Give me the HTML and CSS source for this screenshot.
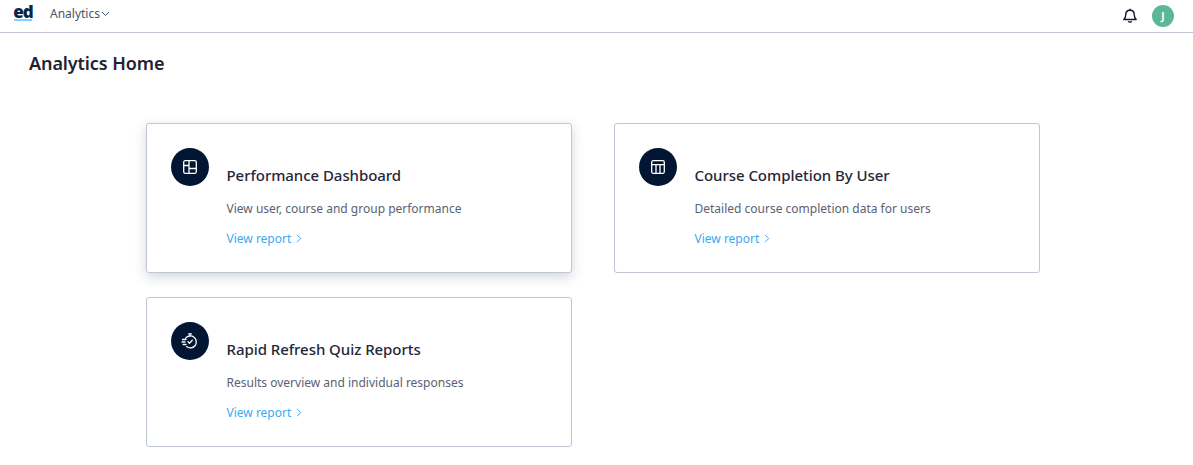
FILE: index.html
```html
<!DOCTYPE html>
<html lang="en">
<head>
<meta charset="utf-8">
<title>Analytics Home</title>
<link rel="stylesheet" href="styles.css">
</head>
<body>
<header class="topbar">
  <div class="topbar-left">
    <div class="logo"><span class="logo-text">ed</span><span class="logo-line"></span></div>
    <nav class="nav-item">Analytics<svg class="chev-down" width="9" height="6" viewBox="0 0 9 6" fill="none"><path d="M1 1l3.500 3.500L8 1" stroke="#4a5568" stroke-width="1"/></svg></nav>
  </div>
  <div class="topbar-right">
    <svg class="bell" width="16" height="16" viewBox="0 0 16 16" fill="none" stroke="#111827" stroke-width="1.400" stroke-linejoin="round"><path d="M8 2.200c-2.700 0-4.200 2-4.200 4.300 0 2.400-.8 3.900-2 5h12.400c-1.200-1.100-2-2.600-2-5 0-2.300-1.500-4.300-4.200-4.300z"/><path d="M6.300 13.300c.5 1.100 2.900 1.100 3.400 0"/><path d="M8 .8v1.400"/></svg>
    <div class="avatar">J</div>
  </div>
</header>
<main class="page">
  <h1 class="page-title">Analytics Home</h1>
  <section class="cards">
    <article class="card card-raised">
      <div class="card-icon"><svg width="16" height="16" viewBox="0 0 16 16" fill="none" stroke="#fff" stroke-width="1.300"><rect x="1.700" y="1.700" width="12.600" height="12.600" rx="1.500"/><path d="M7 1.700v12.600M1.700 6.500H7M7 9.500h7.300"/></svg></div>
      <div class="card-body">
        <h2 class="card-title">Performance Dashboard</h2>
        <p class="card-desc">View user, course and group performance</p>
        <a class="card-link" href="#">View report<svg width="6" height="9" viewBox="0 0 6 9" fill="none"><path d="M1 .8l3.700 3.700L1 8.200" stroke="#3ba9f0" stroke-width="1"/></svg></a>
      </div>
    </article>
    <article class="card">
      <div class="card-icon"><svg width="16" height="16" viewBox="0 0 16 16" fill="none" stroke="#fff" stroke-width="1.300"><rect x="1.700" y="1.700" width="12.600" height="12.600" rx="1.500"/><path d="M1.700 5.700h12.600M6 5.700v8.600M10 5.700v8.600"/></svg></div>
      <div class="card-body">
        <h2 class="card-title">Course Completion By User</h2>
        <p class="card-desc">Detailed course completion data for users</p>
        <a class="card-link" href="#">View report<svg width="6" height="9" viewBox="0 0 6 9" fill="none"><path d="M1 .8l3.700 3.700L1 8.200" stroke="#3ba9f0" stroke-width="1"/></svg></a>
      </div>
    </article>
    <article class="card">
      <div class="card-icon"><svg width="18" height="18" viewBox="0 0 18 18" fill="none" stroke="#fff" stroke-width="1.300" stroke-linecap="round" stroke-linejoin="round"><path d="M7.500 1.800h3M9 1.800v2"/><path d="M4.600 6.200A6 6 0 1 1 5.500 14.600"/><path d="M1.500 7.500h3.500M1 10h3M2.200 12.500h2.800"/><path d="M7 9.800l1.500 1.400 2.800-3"/></svg></div>
      <div class="card-body">
        <h2 class="card-title">Rapid Refresh Quiz Reports</h2>
        <p class="card-desc">Results overview and individual responses</p>
        <a class="card-link" href="#">View report<svg width="6" height="9" viewBox="0 0 6 9" fill="none"><path d="M1 .8l3.700 3.700L1 8.200" stroke="#3ba9f0" stroke-width="1"/></svg></a>
      </div>
    </article>
  </section>
</main>
</body>
</html>
```

FILE: styles.css
```css
* { box-sizing: border-box; }
html, body { margin: 0; padding: 0; background: #fff; overflow: hidden; }
body { font-family: "Noto Sans", sans-serif; color: #1f2233; }
.topbar {
  height: 33px;
  border-bottom: 1px solid #bec5d4;
  display: flex;
  align-items: center;
  justify-content: space-between;
  padding: 0 19px 5px 14px;
}
.topbar-left, .topbar-right { display: flex; align-items: center; }
.logo { width: 18px; height: 17px; display: flex; flex-direction: column; align-items: center; margin-right: 18px; margin-top: -2px; }
.logo-text { font-family: "Open Sans", sans-serif; font-weight: 800; font-size: 17px; line-height: 15px; letter-spacing: -1px; color: #0b2545; }
.logo-line { width: 18px; height: 2px; background: #7fd3f5; }
.nav-item { font-size: 12px; color: #4a5468; display: flex; align-items: center; gap: 1px; }
.bell { margin-right: 14px; margin-top: 4px; }
.avatar {
  width: 22px; height: 22px; border-radius: 50%;
  background: #5cb795; color: #fff; font-size: 10px; font-weight: 700;
  display: flex; align-items: center; justify-content: center; margin-top: 5px;
}
.page { padding: 0 0 0 146px; }
.page-title { font-size: 18px; line-height: 25px; font-weight: 600; letter-spacing: -.005em; margin: 18px 0 47px -117px; color: #1f2233; }
.cards { display: grid; grid-template-columns: 426px 426px; gap: 24px 42px; }
.card {
  height: 150px;
  border: 1px solid #bec5d4;
  border-radius: 3px;
  background: #fff;
  padding: 24px;
  display: flex;
  gap: 18px;
}
.card-raised { box-shadow: 0 4px 12px rgba(60, 70, 110, .22); }
.card-icon {
  width: 38px; height: 38px; border-radius: 50%;
  background: #021533; flex: none;
  display: flex; align-items: center; justify-content: center;
}
.card-body { padding-top: 17px; min-width: 0; margin-left: -.5px; }
.card-title { font-size: 15px; line-height: 20px; font-weight: 500; letter-spacing: -.05px; margin: 0 0 15px; color: #252638; }
.card-desc { font-size: 12px; line-height: 17px; margin: 0 0 9px; color: #5a6172; }
.card-link { font-size: 12px; line-height: 17px; color: #3ba9f0; text-decoration: none; display: inline-flex; align-items: center; gap: 5px; }
```
